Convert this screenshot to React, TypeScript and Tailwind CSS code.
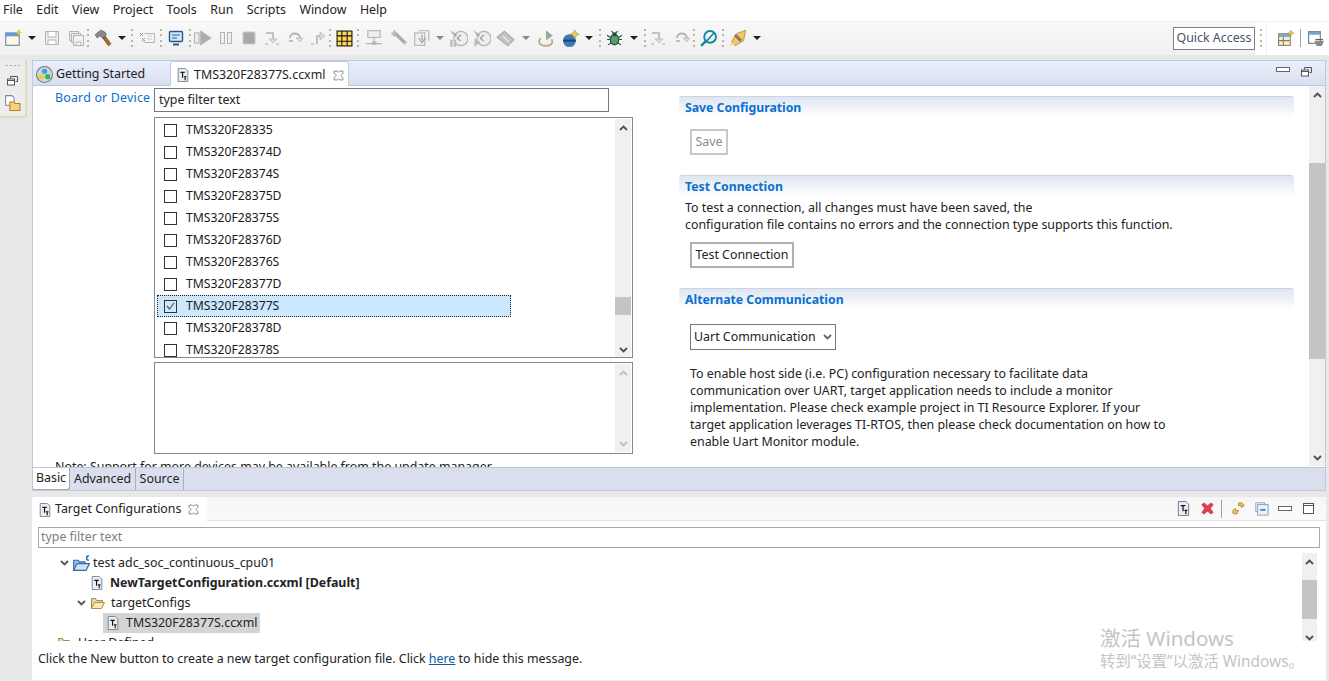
import React from "react";

const FONT = "font-['Noto_Sans','Noto_Sans_CJK_SC',sans-serif]";

type IP = { s?: number };
const Svg = ({ s = 16, children, className = "" }: { s?: number; children: React.ReactNode; className?: string }) => (
  <svg width={s} height={s} viewBox="0 0 16 16" className={"shrink-0 " + className}>{children}</svg>
);

const Dd = ({ c = "#222" }: { c?: string }) => (
  <svg width="8" height="4" viewBox="0 0 8 4" className="shrink-0"><path d="M0 0h8L4 4z" fill={c} /></svg>
);
const Sep = () => (
  <div className="flex h-[22px] w-[2px] shrink-0 flex-col justify-between py-[2px]">
    {[0, 1, 2, 3].map((i) => <div key={i} className="h-[2px] w-[2px] bg-[#b8b8a8]" />)}
  </div>
);
const Slot = ({ w = 23, children }: { w?: number; children: React.ReactNode }) => (
  <div className="flex shrink-0 items-center justify-center" style={{ width: w }}>{children}</div>
);

const G = "#b4b4b4";
const NewI = () => <Svg s={18}><rect x="1.500" y="3.500" width="12" height="11" fill="#fff8e0" stroke="#6a8ab0" /><rect x="1.500" y="3.500" width="12" height="3" fill="#5f9fd8" /><path d="M13 0l1 2 2 1-2 1-1 2-1-2-2-1 2-1z" fill="#f0c040" /></Svg>;
const SaveI = () => <Svg><path d="M1.500 1.500h13v13h-13z" fill="#eee" stroke={G} /><path d="M4 2v5h8V2M4 14v-4h8v4" fill="#fff" stroke={G} /></Svg>;
const SaveAllI = () => <Svg><rect x="1.500" y="1.500" width="9" height="9" fill="#eee" stroke={G} /><rect x="3.500" y="3.500" width="9" height="9" fill="#eee" stroke={G} /><rect x="5.500" y="5.500" width="10" height="10" fill="#f4f4f4" stroke={G} /><path d="M8 15v-3h5v3" fill="none" stroke={G} /></Svg>;
const Hammer = () => <Svg s={18}><path d="M7 7l2-2 6 8-2 2z" fill="#a8692c" stroke="#6e4118" strokeWidth=".6" /><path d="M1 5l5-4 4 2 1 2-3 3-3-2-2 2z" fill="#8a8a8a" stroke="#4e4e4e" strokeWidth=".6" /></Svg>;
const Tag = () => <Svg><path d="M5.500 3.500h10v9h-10l-2-2" fill="none" stroke={G} /><path d="M1 3l3 3M1 6l3-3M3 8l3 3M3 11l3-3" stroke="#999" /><path d="M8 6h5M8 9h5" stroke="#ccc" /></Svg>;
const Monitor = () => <Svg><rect x="1.500" y="1.500" width="13" height="10" rx="1" fill="#d4e8f8" stroke="#265a8c" strokeWidth="1.400" /><path d="M4 5h8M4 8h5" stroke="#265a8c" /><path d="M5 14.500h6" stroke="#265a8c" strokeWidth="2" /></Svg>;
const Play = () => <Svg s={18}><rect x="0.500" y="3.500" width="4" height="9" fill="#eee" stroke={G} /><path d="M6 2l9 6-9 6z" fill="#a6b1b1" stroke={G} /></Svg>;
const Pause = () => <Svg><rect x="2.500" y="2.500" width="4" height="11" fill="#eee" stroke={G} /><rect x="9.500" y="2.500" width="4" height="11" fill="#eee" stroke={G} /></Svg>;
const Stop = () => <Svg><rect x="2" y="2" width="12" height="12" rx="1" fill="#a8a8a8" stroke="#c8c8c8" /></Svg>;
const StepIn = () => <Svg><path d="M2 3h7v6" fill="none" stroke={G} strokeWidth="1.600" /><path d="M5 9h8l-4 4z" fill="#ddd" stroke={G} strokeWidth=".7" /><path d="M1 14h3M12 14h3" stroke="#aaa" /></Svg>;
const StepOver = () => <Svg><path d="M3 8c0-6 9-6 10 0" fill="none" stroke={G} strokeWidth="1.800" /><path d="M9 8h7l-3 4z" fill="#ddd" stroke={G} strokeWidth=".7" /><path d="M2 11h4" stroke="#bbb" strokeWidth="2" /></Svg>;
const StepRet = () => <Svg><path d="M7 14V6h6" fill="none" stroke={G} strokeWidth="1.600" /><path d="M10 2v8l5-4z" fill="#ddd" stroke={G} strokeWidth=".7" /><path d="M1 14h3" stroke="#aaa" /></Svg>;
const Grid = () => <Svg s={17}><rect x="1" y="1" width="14" height="14" fill="#ffd75a" stroke="#111" /><path d="M5.500 1v14M10.500 1v14M1 5.500h14M1 10.500h14" stroke="#111" /></Svg>;
const Net = () => <Svg s={18}><rect x="2.500" y="1.500" width="11" height="6" fill="#eee" stroke={G} /><path d="M8 8v4M1 13h14" stroke={G} /><rect x="6" y="11" width="4" height="3" fill="#aac4a0" /></Svg>;
const Wand = () => <Svg s={18}><path d="M4 4l9 9" stroke="#aaa" strokeWidth="3" /><path d="M3 1l1 2 2 1-2 1-1 2-1-2-2-1 2-1z" fill="#bbb" stroke="#aaa" strokeWidth=".5" /><path d="M11 14l3-3" stroke="#ccc" /></Svg>;
const Dl = () => <Svg s={18}><rect x="1.500" y="3.500" width="9" height="11" fill="#f0f0f0" stroke={G} /><path d="M5 1.500h9v9" fill="none" stroke={G} /><path d="M8 5v5M5 8l3 4 3-4" fill="none" stroke="#999" /></Svg>;
const Clock = ({ bars = false }: { bars?: boolean }) => <Svg s={19}><circle cx="10" cy="8" r="6" fill="#eee" stroke={G} /><path d="M10 5l-3 3 3 2" fill="none" stroke="#999" /><path d="M1 1l6 4-2 2z" fill="#aaa" />{bars ? <path d="M1 9h2v6H1zM4 9h2v6H4z" fill="#bbb" /> : <path d="M2 8l5 3-5 4z" fill="#bbb" />}</Svg>;
const Chip = () => <Svg s={19}><path d="M1 7l6-5 8 7-5 5z" fill="#c4c4c4" stroke="#aaa" /><path d="M3 10l5 5M6 6l5 5" stroke="#eee" /></Svg>;
const Restart = () => <Svg s={18}><path d="M8 1l6 5-6 4z" fill="#96a8a0" /><path d="M3 8c-3 5 1 7 5 7s7-2 5-6" fill="none" stroke="#b7a77e" strokeWidth="1.500" /></Svg>;
const Bomb = () => <Svg s={17}><circle cx="7" cy="10" r="6" fill="#3f78b8" /><path d="M1 10h12" stroke="#18467c" strokeWidth="2" /><path d="M12 0l1.400 2.600L16 4l-2.600 1.400L12 8l-1.400-2.600L8 4l2.600-1.400z" fill="#f2c95a" stroke="#a87820" strokeWidth=".5" /></Svg>;
const Bug = () => <Svg s={17}><ellipse cx="8" cy="9" rx="4" ry="5" fill="#5a9a70" stroke="#1e5038" /><circle cx="8" cy="4" r="2" fill="#1e5038" /><path d="M1 5l3 2M15 5l-3 2M1 9h3M15 9h-3M2 14l3-2M14 14l-3-2M5 1l2 2M11 1L9 3" stroke="#2c4a3a" /></Svg>;
const Magnify = () => <Svg s={17}><circle cx="9.500" cy="6.500" r="5.500" fill="#eef8fa" stroke="#16849a" strokeWidth="1.800" /><path d="M6 10.500L13 3" stroke="#16849a" strokeWidth="1.500" /><path d="M5.500 10.500L1 15" stroke="#16849a" strokeWidth="2.200" /></Svg>;
const Pen = () => <Svg s={19}><path d="M15 1l-8 3-4 7 3 3 7-4z" fill="#f0c868" stroke="#a87c28" strokeWidth=".6" /><path d="M6 5l5 5" stroke="#8a7860" strokeWidth="2.500" /><path d="M3 11l-2 4 4-2z" fill="#f8e0a0" /></Svg>;
const Persp = () => <Svg s={17}><rect x="1.500" y="3.500" width="11" height="11" fill="#f8ecd0" stroke="#8a8060" /><rect x="1.500" y="3.500" width="11" height="3" fill="#7ca4cc" /><path d="M6 6v8M1 10h11" stroke="#8a8060" /><path d="M13 0l1 2 2 1-2 1-1 2-1-2-2-1 2-1z" fill="#f0c040" stroke="#a87c28" strokeWidth=".4" /></Svg>;
const Persp2 = () => <Svg s={17}><rect x="1.500" y="1.500" width="11" height="11" fill="#fff" stroke="#5a7a90" /><rect x="1.500" y="1.500" width="11" height="3" fill="#7ca4cc" /><path d="M7 10h9l-2 5H9z" fill="#8a8a8a" /><path d="M8 9h7" stroke="#555" /></Svg>;
const Ccxml = ({ s = 14 }: IP) => <Svg s={s}><path d="M2.500.5h8l3 3v12h-11z" fill="#e8eef4" stroke="#6a7a90" /><path d="M5 5h5M7.500 5v6M9 10h3M10.500 10v4" stroke="#111" strokeWidth="1.300" fill="none" /></Svg>;
const Welcome = () => <Svg s={17}><circle cx="8" cy="8" r="7.500" fill="#cfd6dc" stroke="#6e7a84" /><circle cx="8" cy="5" r="2.500" fill="#3fa0e0" /><circle cx="5" cy="10" r="2.500" fill="#e8d040" /><circle cx="11" cy="10" r="2.500" fill="#40b060" /></Svg>;
const Close = () => <svg width="11" height="11" viewBox="0 0 10 10"><path d="M1 1l3 0 1 1 1-1 3 0 0 2-2 2 2 2 0 2-3 0-1-1-1 1-3 0 0-2 2-2-2-2z" fill="#fff" stroke="#7a7a7a" strokeWidth=".8" /></svg>;
const Chev = ({ up = false, c = "#555" }: { up?: boolean; c?: string }) => (
  <svg width="9" height="6" viewBox="0 0 9 6"><path d={up ? "M1 5l3.500-3.500L8 5" : "M1 1l3.500 3.500L8 1"} fill="none" stroke={c} strokeWidth="1.800" /></svg>
);
const Folder = () => <Svg><path d="M1.500 13.500v-10h4l1 2h6v2" fill="#e8d8a8" stroke="#a08850" /><path d="M1.500 13.500l3-6h10l-3 6z" fill="#f8e8b8" stroke="#b09048" /></Svg>;
const Project = () => <Svg s={18}><path d="M1.500 14.500v-9h4l1 1.500h5v2" fill="#9cc0e4" stroke="#2c6aa8" /><path d="M1.500 14.500l3-6h11l-3 6z" fill="#cfe2f4" stroke="#2c6aa8" /><path d="M15 1.500a2 2 0 1 0 0 4" fill="none" stroke="#2c6aa8" strokeWidth="1.300" /></Svg>;
const Mini = () => <svg width="14" height="6" viewBox="0 0 14 6"><rect x=".5" y=".5" width="13" height="4" fill="#fff" stroke="#666" /></svg>;
const Restore = () => <svg width="11" height="10" viewBox="0 0 11 10"><path d="M3.500 2.500v-2h7v5h-2" fill="none" stroke="#555" /><rect x=".5" y="3" width="7" height="6" fill="#fff" stroke="#555" /><path d="M.5 4.500h7" stroke="#555" /></svg>;
const Maxi = () => <svg width="11" height="11" viewBox="0 0 11 11"><rect x=".5" y=".5" width="10" height="10" fill="#fff" stroke="#555" /><path d="M.5 2.500h10" stroke="#555" /></svg>;

const Toolbar = () => (
  <div className="flex h-[33px] shrink-0 items-center border-b border-[#f0f0f0] bg-gradient-to-b from-[#f8f8f8] to-[#f0f0f0] pl-[2px]">
    <Slot w={22}><NewI /></Slot><Slot w={16}><Dd /></Slot><Slot w={24}><SaveI /></Slot><Slot w={23}><SaveAllI /></Slot>
    <Sep />
    <Slot w={28}><Hammer /></Slot><Slot w={10}><Dd /></Slot><div className="w-[4px]" />
    <Sep />
    <Slot w={27}><Tag /></Slot>
    <Sep />
    <Slot w={27}><Monitor /></Slot>
    <Sep />
    <Slot w={23}><Play /></Slot><Slot w={23}><Pause /></Slot><Slot w={23}><Stop /></Slot><Slot w={23}><StepIn /></Slot><Slot w={23}><StepOver /></Slot><Slot w={23}><StepRet /></Slot>
    <Sep />
    <Slot w={26}><Grid /></Slot>
    <Sep />
    <Slot w={30}><Net /></Slot><Slot w={22}><Wand /></Slot><Slot w={22}><Dl /></Slot><Slot w={14}><Dd c="#888" /></Slot>
    <Slot w={23}><Clock bars /></Slot><Slot w={23}><Clock /></Slot><Slot w={25}><Chip /></Slot><Slot w={15}><Dd c="#888" /></Slot>
    <Slot w={26}><Restart /></Slot><Slot w={23}><Bomb /></Slot><Slot w={14}><Dd /></Slot><div className="w-[3px]" />
    <Sep />
    <Slot w={26}><Bug /></Slot><Slot w={14}><Dd /></Slot><div className="w-[3px]" />
    <Sep />
    <Slot w={24}><StepIn /></Slot><Slot w={23}><StepOver /></Slot>
    <Sep />
    <Slot w={27}><Magnify /></Slot>
    <Sep />
    <Slot w={26}><Pen /></Slot><Slot w={14}><Dd /></Slot>
    <div className="flex-1" />
    <div className="flex h-[23px] w-[82px] items-center justify-center whitespace-nowrap border border-[#808080] bg-white text-[12.400px] text-[#44546a]">Quick Access</div>
    <div className="flex h-[33px] items-center bg-white pl-[5px]">
      <Sep />
      <div className="ml-[4px] h-[33px] border-l border-[#f0f0f0] pl-[6px]" />
      <div className="flex items-center pr-[2px]">
        <Slot w={24}><Persp /></Slot>
        <div className="mx-[3px] h-[18px] w-px bg-[#a0a0a0]" />
        <Slot w={23}><Persp2 /></Slot>
      </div>
    </div>
  </div>
);

const Scrollbar = ({ h, top, th, w = 16, dim = false, x = 0 }: { h: number; top: number; th: number; w?: number; dim?: boolean; x?: number }) => (
  <div className="flex shrink-0 flex-col items-center bg-[#f0f0f0]" style={{ height: h, width: w, marginLeft: x }}>
    <div className="flex h-[17px] shrink-0 items-center justify-center"><Chev up c={dim ? "#c0c0c0" : "#505050"} /></div>
    <div className="min-h-0 flex-1 self-stretch">
      {th > 0 && <div className="bg-[#c4c4c4]" style={{ marginTop: top, height: th }} />}
    </div>
    <div className="flex h-[17px] shrink-0 items-center justify-center"><Chev c={dim ? "#c0c0c0" : "#505050"} /></div>
  </div>
);

const DEVICES = ["TMS320F28335", "TMS320F28374D", "TMS320F28374S", "TMS320F28375D", "TMS320F28375S", "TMS320F28376D", "TMS320F28376S", "TMS320F28377D", "TMS320F28377S", "TMS320F28378D", "TMS320F28378S"];

const DeviceRow = ({ name }: { name: string }) => {
  const sel = name === "TMS320F28377S";
  return (
    <div className={"ml-[2px] flex h-[22px] w-[354px] shrink-0 items-center " + (sel ? "border border-dotted border-[#222] bg-[#cce8ff] pl-[6px]" : "pl-[7px]")}>
      <div className="flex h-[13px] w-[13px] shrink-0 items-center justify-center border border-[#333]">
        {sel && <svg width="11" height="11" viewBox="0 0 11 11"><path d="M2 5l2.500 3L9 2" fill="none" stroke="#555" strokeWidth="1.200" /></svg>}
      </div>
      <span className="ml-[9px] text-[12.200px] leading-none text-[#1a1a1a]">{name}</span>
    </div>
  );
};

const Section = ({ title, children }: { title: string; children: React.ReactNode }) => (
  <div>
    <div className="h-[22px] rounded-t-[3px] border-x border-t border-[#c8d4e8] border-x-transparent bg-gradient-to-b from-[#dfe6f1] to-white pl-[5px] text-[12.250px] font-bold leading-[21px] text-[#0a70d0]">{title}</div>
    {children}
  </div>
);

const Editor = () => (
  <div className="flex h-[431px] flex-col border border-[#bccae0] bg-white">
    <div className="flex h-[25px] shrink-0 items-end border-b border-[#bcc6d8] bg-gradient-to-b from-[#e9effc] to-[#d9dfee]">
      <div className="flex h-[24px] w-[137px] items-center pl-[3px] pt-[2px]">
        <Welcome /><span className="ml-[3px] text-[12.400px]">Getting Started</span>
      </div>
      <div className="-mb-px flex h-[25px] w-[179px] items-center rounded-t-[3px] border-x border-t border-[#c4cede] bg-white pl-[5px] pt-[2px]">
        <Ccxml /><span className="ml-[4px] text-[12.400px] text-[#222]">TMS320F28377S.ccxml</span><span className="ml-[8px] flex"><Close /></span>
      </div>
      <div className="flex-1" />
      <div className="flex h-[24px] items-start gap-[11px] pr-[13px] pt-[6px]"><Mini /><Restore /></div>
    </div>
    <div className="flex min-h-0 flex-1">
      <div className="h-[382px] w-[646px] shrink-0 overflow-hidden pl-[22px] pt-[2px]">
        <div className="flex items-start">
          <span className="w-[99px] shrink-0 whitespace-nowrap pt-[1px] text-[12.400px] leading-[18px] tracking-[.2px] text-[#0a70d0]">Board or Device</span>
          <div className="flex h-[24px] w-[455px] items-center border border-[#777] pl-[4px] text-[12.400px] text-[#222]">type filter text</div>
        </div>
        <div className="ml-[99px] mt-[5px] flex h-[241px] w-[479px] overflow-hidden border border-[#828790] pt-[1px]">
          <div className="h-[239px] flex-1 overflow-hidden">
            {DEVICES.map((d) => <DeviceRow key={d} name={d} />)}
          </div>
          <Scrollbar h={239} top={161} th={18} x={0} />
          <div className="w-px" />
        </div>
        <div className="ml-[99px] mt-[4px] flex h-[92px] w-[479px] justify-end border border-[#828790] pr-px pt-[1px]">
          <Scrollbar h={88} top={0} th={0} dim />
        </div>
        <div className="mt-[4px] whitespace-nowrap text-[12.400px] text-[#222]">Note: Support for more devices may be available from the update manager.</div>
      </div>
      <div className="flex h-[382px] min-w-0 flex-1 overflow-hidden">
        <div className="w-[615px] shrink-0 pt-[10px]">
          <Section title="Save Configuration">
            <button className="ml-[11px] mt-[11px] h-[26px] w-[38px] border-2 border-[#c8c8c8] text-[12.400px] leading-none text-[#8a8a8a]">Save</button>
          </Section>
          <div className="mt-[20px]">
            <Section title="Test Connection">
              <p className="pl-[6px] pt-[2px] text-[12.400px] leading-[17px] text-[#222]">To test a connection, all changes must have been saved, the<br />configuration file contains no errors and the connection type supports this function.</p>
              <button className="ml-[11px] mt-[9px] h-[26px] w-[104px] border-2 border-[#b0b0b0] text-[12.400px] leading-none text-[#222]">Test Connection</button>
            </Section>
          </div>
          <div className="mt-[20px]">
            <Section title="Alternate Communication">
              <div className="ml-[11px] mt-[14px] flex h-[26px] w-[146px] items-center justify-between border border-[#777] pl-[3px] pr-[3px] text-[12.400px] text-[#222]">
                <span>Uart Communication</span><Chev c="#666" />
              </div>
              <p className="ml-[11px] mt-[15px] w-[490px] text-[12.400px] leading-[17px] text-[#222]">To enable host side (i.e. PC) configuration necessary to facilitate data<br />communication over UART, target application needs to include a monitor<br />implementation. Please check example project in TI Resource Explorer. If your<br />target application leverages TI-RTOS, then please check documentation on how to<br />enable Uart Monitor module.</p>
            </Section>
          </div>
        </div>
        <div className="ml-[15px] flex-1"><Scrollbar h={380} top={60} th={196} /></div>
      </div>
    </div>
    <div className="flex h-[23px] shrink-0 items-start border-t border-[#bcc6d8] bg-[#d9dfed]">
      <div className="flex h-[22px] w-[37px] items-center justify-center rounded-b-[3px] border-b border-r border-[#a8a8a8] bg-white text-[12.400px]">Basic</div>
      <div className="flex h-[22px] w-[66px] items-center justify-center border-r border-[#a8b0c0] text-[12.400px]">Advanced</div>
      <div className="flex h-[22px] w-[48px] items-center justify-center border-r border-[#a8b0c0] text-[12.400px]">Source</div>
    </div>
  </div>
);

const Targets = () => (
  <div className="mt-[6px] flex h-[183px] flex-col bg-white">
    <div className="flex h-[24px] shrink-0 items-center border-b border-[#e4e4e4] bg-gradient-to-b from-[#f6f6f6] to-[#fafafa]">
      <div className="-mb-px flex h-[24px] w-[175px] items-center rounded-t-[3px] bg-white pl-[6px] pt-[1px]">
        <Ccxml /><span className="ml-[3px] text-[12.400px] text-[#222]">Target Configurations</span><span className="ml-[7px] flex"><Close /></span>
      </div>
      <div className="flex-1" />
      <div className="flex items-center pr-[12px]">
        <Ccxml s={15} />
        <Svg s={15} className="ml-[9px]"><path d="M2 4l2-2 4 3 4-3 2 2-3 4 3 4-2 2-4-3-4 3-2-2 3-4z" fill="#e04050" stroke="#b02030" strokeWidth=".6" /></Svg>
        <div className="ml-[6px] h-[18px] w-px bg-[#a0a0a0]" />
        <Svg s={15} className="ml-[9px]"><path d="M8 2l4 0 2 3-3 2 0-2H8zM2 10l3-2 0 2h3l-2 4-4-1z" fill="#f0c848" stroke="#a87c20" strokeWidth=".8" /></Svg>
        <Svg s={14} className="ml-[9px]"><rect x="1" y="1" width="10" height="10" fill="#fff" stroke="#7c98b8" /><rect x="3" y="3" width="12" height="12" fill="#e8f0f8" stroke="#7c98b8" /><path d="M6 9h6" stroke="#185a9a" strokeWidth="1.500" /></Svg>
        <span className="ml-[9px]"><Mini /></span>
        <span className="ml-[11px]"><Maxi /></span>
      </div>
    </div>
    <div className="mx-[6px] mt-[6px] flex h-[21px] shrink-0 items-center border border-[#a8a8a8] pl-[2px] text-[12.400px] text-[#808080]">type filter text</div>
    <div className="flex h-[93px] shrink-0 overflow-hidden pt-[5px]">
      <div className="h-[93px] min-w-0 flex-1 overflow-hidden text-[12.400px] text-[#222]">
        <div className="flex h-[20px] items-center pl-[28px]"><Chev /><span className="ml-[3px]"><Project /></span><span className="ml-[3px]">test adc_soc_continuous_cpu01</span></div>
        <div className="flex h-[20px] items-center pl-[58px]"><Ccxml /><span className="ml-[6px] font-bold leading-none">NewTargetConfiguration.ccxml [Default]</span></div>
        <div className="flex h-[20px] items-center pl-[45px]"><Chev /><span className="ml-[4px]"><Folder /></span><span className="ml-[5px]">targetConfigs</span></div>
        <div className="ml-[71px] flex h-[20px] w-[157px] items-center bg-[#d4d4d4] pl-[3px]"><Ccxml /><span className="ml-[6px]">TMS320F28377S.ccxml</span></div>
        <div className="flex h-[20px] items-center pl-[25px]"><Folder /><span className="ml-[5px]">User Defined</span></div>
      </div>
      <div className="mr-[9px]"><Scrollbar h={93} top={10} th={39} w={15} /></div>
    </div>
    <div className="flex min-h-0 flex-1 items-start pl-[6px] pt-[9px] text-[12.400px] leading-[18px] text-[#222]">
      <span>Click the New button to create a new target configuration file. Click <span className="text-[#0a5aa8] underline">here</span> to hide this message.</span>
    </div>
  </div>
);

export default function App() {
  return (
    <div className={FONT + " relative flex h-[681px] w-[1329px] flex-col overflow-hidden bg-[#e8e8e8] text-[#222]"}>
      <div className="flex h-[22px] shrink-0 items-center gap-[13.500px] border-b border-[#f0f0f0] bg-white pl-[3px] text-[12.400px]">
        {["File", "Edit", "View", "Project", "Tools", "Run", "Scripts", "Window", "Help"].map((m) => <span key={m}>{m}</span>)}
      </div>
      <Toolbar />
      <div className="flex min-h-0 flex-1 pt-[5px]">
        <div className="w-[32px] shrink-0">
          <div className="flex h-[58px] w-[27px] flex-col items-center rounded-br-[3px] border-b-2 border-r-2 border-[#e0dcc0] bg-[#ededed] pt-[5px]">
            <div className="flex gap-[2px]">{[0,1,2,3].map((i)=><div key={i} className="h-px w-[2px] bg-[#aaa]" />)}</div>
            <div className="mt-[10px]"><Restore /></div>
            <Svg s={17} className="mt-[8px]"><path d="M1.500 1.500h6l2 2v7h-8z" fill="#fff" stroke="#7a8ca0" /><path d="M5.500 15.500v-8h4l1 1.500h4.500v6.500z" fill="#f8d478" stroke="#b08030" /></Svg>
          </div>
        </div>
        <div className="min-w-0 flex-1 pr-[3px]">
          <Editor />
          <Targets />
        </div>
      </div>
      <div className="pointer-events-none absolute left-[1100px] top-[625px] text-[#c4c4c4]">
        <div className="text-[20.500px] leading-[27px]">激活 Windows</div>
        <div className="mt-[-1px] whitespace-nowrap text-[15.400px] leading-[22px]">转到“设置”以激活 Windows。</div>
      </div>
    </div>
  );
}
